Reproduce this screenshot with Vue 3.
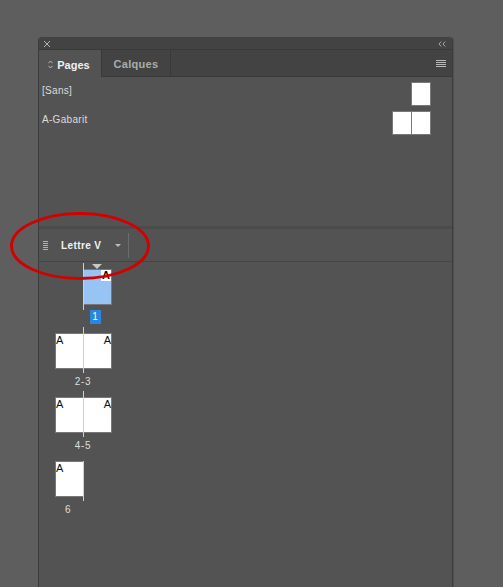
<script setup>
const masters = [
  { name: '[Sans]', pages: 1 },
  { name: 'A-Gabarit', pages: 2 },
]
const spreads = [
  { label: '2-3', right: true },
  { label: '4-5', right: true },
  { label: '6', right: false },
]
</script>

<template>
  <div class="stage">
    <section class="panel">
      <header class="titlebar">
        <svg class="close" width="8" height="8" viewBox="0 0 8 8"><path d="M1 1l6 6M7 1L1 7" stroke="#b4b4b4" stroke-width="1" fill="none" /></svg>
        <svg class="collapse" width="8" height="6" viewBox="0 0 8 6"><path d="M3.2 .5L1 3l2.2 2.5M7.2 .5L5 3l2.2 2.5" stroke="#a8a8a8" stroke-width="1" fill="none" /></svg>
      </header>
      <nav class="tabs">
        <div class="tab active">
          <svg width="5" height="9" viewBox="0 0 5 9"><path d="M.5 3.2L2.5 1l2 2.2M.5 5.8L2.5 8l2-2.2" stroke="#c4c4c4" stroke-width=".9" fill="none" /></svg>
          <span>Pages</span>
        </div>
        <div class="tab">Calques</div>
        <div class="menu"><i></i><i></i><i></i><i></i></div>
      </nav>
      <div class="masters">
        <div v-for="m in masters" :key="m.name" class="master">
          <span>{{ m.name }}</span>
          <div class="master-thumb">
            <b v-for="n in m.pages" :key="n"></b>
          </div>
        </div>
      </div>
      <div class="divider"></div>
      <div class="toolbar">
        <div class="grip"><i></i><i></i><i></i><i></i><i></i></div>
        <span class="variant">Lettre V</span>
        <span class="caret"></span>
        <span class="sep"></span>
      </div>
      <div class="pages">
        <div class="row first">
          <span class="marker"></span>
          <div class="spread">
            <div class="page empty"></div>
            <div class="page right selected"><span class="a">A</span></div>
          </div>
          <div class="label"><span class="current">1</span></div>
        </div>
        <div v-for="s in spreads" :key="s.label" class="row" :class="{ last: !s.right }">
          <div class="spread">
            <div class="page left"><span class="a">A</span></div>
            <div v-if="s.right" class="page right"><span class="a">A</span></div>
            <div v-else class="page empty"></div>
          </div>
          <div class="label" :class="{ single: !s.right }">{{ s.label }}</div>
        </div>
      </div>
    </section>
    <svg class="ring" width="152" height="76" viewBox="0 0 152 76">
      <ellipse cx="80" cy="38" rx="68.5" ry="32.5" fill="none" stroke="#d30000" stroke-width="3" />
    </svg>
  </div>
</template>

<style scoped>
.stage {
  position: relative;
  width: 503px;
  height: 587px;
  overflow: hidden;
  background: #5e5e5e;
  padding: 37px 0 0 38px;
  box-sizing: border-box;
  font-family: "Liberation Sans", Arial, sans-serif;
  color: #e0e0e0;
}
.panel {
  width: 415px;
  height: 560px;
  background: #535353;
  border: solid #3c3c3c;
  border-width: 0 1px 0 1px;
  border-radius: 4px 4px 0 0;
  box-sizing: border-box;
  box-shadow: 1px 0 1px rgba(0, 0, 0, .15);
}
.titlebar {
  height: 13px;
  background: #434343;
  border-bottom: 1px solid #393939;
  border-radius: 4px 4px 0 0;
  display: flex;
  align-items: center;
  justify-content: space-between;
  padding: 1px 6px 0 4px;
  box-sizing: border-box;
}
.tabs {
  height: 27px;
  background: #434343;
  border-bottom: 1px solid #393939;
  display: flex;
  box-sizing: border-box;
}
.tab {
  width: 69px;
  border-right: 1px solid #393939;
  font: bold 11px "Liberation Sans", Arial, sans-serif;
  letter-spacing: .3px;
  color: #acacac;
  display: flex;
  align-items: center;
  justify-content: center;
  box-sizing: border-box;
  padding-top: 2px;
}
.tab.active {
  width: 63px;
  height: 27px;
  background: #535353;
  color: #f0f0f0;
  gap: 4px;
  letter-spacing: 0;
  padding-right: 2px;
}
.menu {
  margin-left: auto;
  margin-right: 6px;
  align-self: center;
  display: flex;
  flex-direction: column;
  gap: 1px;
}
.menu i {
  display: block;
  width: 10px;
  height: 1px;
  background: #b8b8b8;
}
.masters {
  height: 149px;
  padding: 3px 21px 0 3px;
  box-sizing: border-box;
}
.master {
  height: 29px;
  display: flex;
  align-items: flex-start;
  justify-content: space-between;
  font-size: 10px;
  line-height: 22px;
  color: #dcdcdc;
  letter-spacing: .3px;
}
.master-thumb {
  display: flex;
  padding-top: 2px;
}
.master-thumb b {
  display: block;
  width: 20px;
  height: 24px;
  background: #fff;
  border: 1px solid #787878;
  box-sizing: border-box;
}
.master-thumb b + b {
  margin-left: -1px;
}
.divider {
  height: 3px;
  background: #4b4b4b;
}
.toolbar {
  height: 33px;
  display: flex;
  align-items: center;
  border-bottom: 1px solid #454545;
  box-sizing: border-box;
  padding-left: 4px;
}
.grip {
  width: 5px;
  display: flex;
  flex-direction: column;
  gap: 1px;
}
.grip i {
  display: block;
  height: 1px;
  background: #b0b0b0;
}
.variant {
  margin-left: 13px;
  font: bold 10px "Liberation Sans", Arial, sans-serif;
  letter-spacing: .4px;
  color: #f2f2f2;
  width: 54px;
  white-space: nowrap;
}
.caret {
  width: 0;
  height: 0;
  border: solid transparent;
  border-width: 3px 3.5px 0;
  border-top-color: #bdbdbd;
}
.sep {
  margin-left: 7px;
  width: 1px;
  height: 25px;
  background: #6c6c6c;
}
.pages {
  padding-left: 16px;
}
.row {
  position: relative;
  width: 57px;
  height: 64px;
}
.row.first {
  height: 65px;
  padding-top: 1px;
  box-sizing: border-box;
}
.marker {
  position: absolute;
  left: 37px;
  top: 2px;
  width: 0;
  height: 0;
  border: solid transparent;
  border-width: 5px 5px 0;
  border-top-color: #c8c8c8;
}
.spread {
  position: relative;
  display: flex;
  padding: 6px 0 4px;
  width: 57px;
  height: 36px;
  box-sizing: content-box;
}
.first .spread {
  padding-bottom: 5px;
}
.spread::after {
  content: "";
  position: absolute;
  left: 28px;
  top: 0;
  bottom: 0;
  width: 1px;
  background: #cfcfcf;
}
.last .spread::after {
  top: 6px;
}
.page {
  position: relative;
  width: 28px;
  height: 36px;
  background: #fff;
  box-sizing: border-box;
  border: 1px solid #787878;
}
.page.left { border-right: 0; }
.page.right { width: 29px; border-left: 0; }
.page.empty {
  background: transparent;
  border: 0;
}
.page.selected {
  background: #97c4f5;
}
.a {
  position: absolute;
  top: 1px;
  left: 0;
  font-size: 11px;
  line-height: 10px;
  color: #111;
}
.page.right .a {
  left: auto;
  right: 0;
}
.page.selected .a {
  top: 0;
  background: #fff;
  font-weight: bold;
  padding: 0 1px;
  line-height: 11px;
}
.label {
  width: 56px;
  text-align: center;
  font-size: 10px;
  line-height: 14px;
  color: #dedede;
  letter-spacing: .6px;
  margin-top: 2px;
}
.label.single {
  width: 26px;
}
.first .label {
  margin-top: 0;
  padding-left: 23px;
  width: 57px;
  box-sizing: border-box;
  letter-spacing: 0;
}
.current {
  display: inline-block;
  width: 11px;
  height: 14px;
  background: #2b86e0;
  color: #fff;
  font-size: 10px;
}
.ring {
  position: absolute;
  left: 0;
  top: 208px;
}
</style>
